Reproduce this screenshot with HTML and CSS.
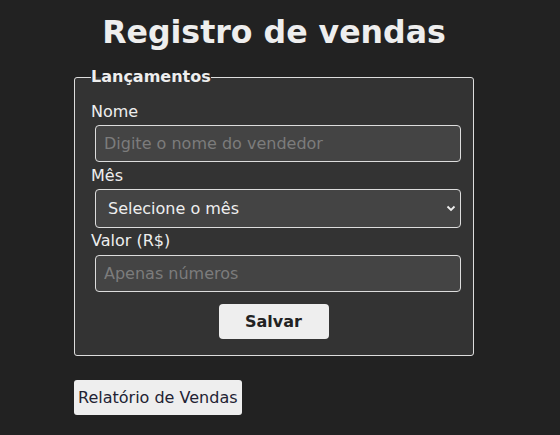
FILE: index.html
```html
<!DOCTYPE html>
<html lang="pt-BR">
<head>
<meta charset="utf-8">
<title>Registro de vendas</title>
<link rel="stylesheet" href="styles.css">
</head>
<body>
<main class="container">
  <h1 class="title">Registro de vendas</h1>
  <form class="form">
    <fieldset class="box">
      <legend class="legend">Lançamentos</legend>
      <label class="label" for="nome">Nome</label>
      <input class="field" id="nome" type="text" placeholder="Digite o nome do vendedor">
      <label class="label" for="mes">Mês</label>
      <div class="select">
        <span class="select-text">Selecione o mês</span>
        <svg class="chev" width="10" height="7" viewBox="0 0 10 7"><path d="M1.5 1.5 L5 5 L8.5 1.5" fill="none" stroke="#eee" stroke-width="1.8"/></svg>
      </div>
      <label class="label" for="valor">Valor (R$)</label>
      <input class="field field-last" id="valor" type="text" placeholder="Apenas números">
      <div class="actions"><button class="save" type="button">Salvar</button></div>
    </fieldset>
  </form>
  <button class="report" type="button">Relatório de Vendas</button>
</main>
</body>
</html>
```
FILE: styles.css
```css
html, body { margin: 0; padding: 0; }
body {
  background: #222222;
  color: #eeeeee;
  font-family: "DejaVu Sans", sans-serif;
  font-size: 16px;
}
.container {
  width: 400px;
  padding-left: 74px;
  display: flex;
  flex-direction: column;
  align-items: flex-start;
}
.title {
  align-self: stretch;
  text-align: center;
  font-size: 31.6px;
  font-weight: bold;
  margin: 13px 0 17px;
  line-height: 38px;
}
.form { width: 400px; margin: 0; }
.box {
  margin: 0;
  padding: 16px 12px 16px 16px;
  border: 1px solid #dddddd;
  border-radius: 3px;
  background: #333333;
  display: flex;
  flex-direction: column;
}
.legend {
  font-weight: bold;
  padding: 0;
  line-height: 18px;
  font-size: 16px;
}
.label {
  display: block;
  line-height: 20px;
  margin: 0;
}
.field, .select {
  box-sizing: border-box;
  width: 366px;
  margin: 3px 0 4px 4px;
  border: 1px solid #dddddd;
  border-radius: 4px;
  background: #444444;
  color: #eeeeee;
  font-family: inherit;
  font-size: 16px;
  height: 37px;
  padding: 0 8px;
}
.field::placeholder { color: #7c7c7c; }
.select {
  height: 39px;
  margin-bottom: 3px;
  display: flex;
  align-items: center;
  justify-content: space-between;
  padding: 0 4px 0 12px;
}
.field-last { margin-top: 4px; margin-bottom: 0; }
.actions { display: flex; justify-content: center; margin-top: 12px; }
.save {
  width: 110px;
  height: 35px;
  margin-right: 5px;
  border: none;
  border-radius: 4px;
  background: #eeeeee;
  color: #222222;
  font-family: inherit;
  font-weight: bold;
  font-size: 16px;
}
.report {
  margin-top: 24px;
  height: 35px;
  padding: 0 4px;
  border: none;
  border-radius: 3px;
  background: #eeeeee;
  color: #222233;
  font-family: inherit;
  font-size: 16px;
}
```
